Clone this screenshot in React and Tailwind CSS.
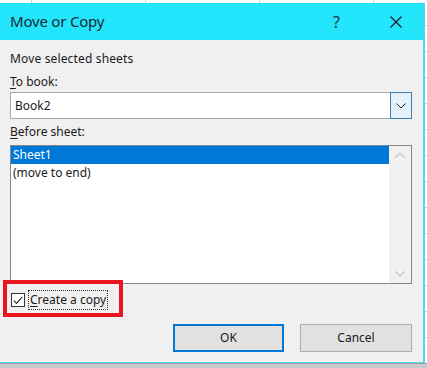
import React from 'react';

const font = { fontFamily: '"Noto Sans", "Open Sans", Arial, sans-serif' };

// Dialog window sitting over an Excel sheet
const App = () => {
	return (
		<div
			className="relative w-[427px] h-[368px] overflow-hidden bg-white bg-[repeating-linear-gradient(90deg,transparent_0,transparent_31px,#d4d4d4_31px,#d4d4d4_32px,transparent_32px,transparent_114px)]"
			style={font}
		>
			<div className="mt-[3px] w-[425px] h-[360px] flex flex-col bg-[#f0f0f0] border-r-2 border-b-[1px] border-[#4fd8ea] text-[#1a1a1a]">
				{/* title bar */}
				<div className="h-[37px] shrink-0 bg-[#22e4fb] flex items-center pl-[10px] pr-[21px]">
					<span className="text-[15px] text-[#152a30] tracking-[-0.2px]">Move or Copy</span>
					<span className="ml-auto text-[16px] text-[#1d3b44] mr-[50px]">?</span>
					<svg width="12" height="12" viewBox="0 0 12 12">
						<path d="M0.5 0.5L11.5 11.5M11.5 0.5L0.5 11.5" stroke="#1a1a1a" strokeWidth="1.1" />
					</svg>
				</div>

				<div className="flex flex-col pl-[10px] pr-[11px] pt-[11px] text-[12px] leading-[16px]">
					<div className="tracking-[0.15px]">Move selected sheets</div>
					<div className="mt-[7px]">
						<span className="underline underline-offset-2">T</span>o book:
					</div>

					<div className="mt-[2px] h-[27px] flex items-stretch bg-white border border-[#a9a9a9]">
						<div className="flex-1 flex items-center pl-[4px]">Book2</div>
						<div className="w-[22px] flex items-center justify-center bg-[#e5f1fb] border border-[#3c7fb1] -my-[1px] -mr-[1px]">
							<svg width="10" height="6" viewBox="0 0 10 6">
								<path d="M0.5 0.5L5 5L9.5 0.5" stroke="#222" strokeWidth="1" fill="none" />
							</svg>
						</div>
					</div>

					<div className="mt-[5px]">
						<span className="underline underline-offset-2">B</span>efore sheet:
					</div>

					<div className="mt-[5px] h-[139px] flex bg-white border border-[#828790]">
						<div className="flex-1 flex flex-col">
							<div className="h-[18px] flex items-center pl-[2px] bg-[#0078d7] text-white">Sheet1</div>
							<div className="h-[18px] flex items-center pl-[2px]">(move to end)</div>
						</div>
						<div className="w-[22px] bg-[#f0f0f0] flex flex-col items-center justify-between py-[6px]">
							<svg width="10" height="6" viewBox="0 0 10 6">
								<path d="M0.5 5.5L5 1L9.5 5.5" stroke="#c2c2c2" strokeWidth="1.2" fill="none" />
							</svg>
							<svg width="10" height="6" viewBox="0 0 10 6">
								<path d="M0.5 0.5L5 5L9.5 0.5" stroke="#c2c2c2" strokeWidth="1.2" fill="none" />
							</svg>
						</div>
					</div>

					<div className="mt-[6px] h-[20px] flex items-center">
						<div className="w-[14px] h-[14px] ml-[1px] bg-white border border-[#333] flex items-center justify-center">
							<svg width="10" height="9" viewBox="0 0 10 9">
								<path d="M0.8 4.6L3.6 7.4L9.2 1" stroke="#222" strokeWidth="1.1" fill="none" />
							</svg>
						</div>
						<div className="ml-[3px] h-[20px] px-[1px] flex items-center border border-dotted border-[#333]">
							<span className="underline underline-offset-2">C</span>reate a copy
						</div>
					</div>

					<div className="mt-[14px] flex justify-end gap-[16px]">
						<button className="w-[111px] h-[28px] bg-[#e1e1e1] border-2 border-[#0078d7] text-[12px]">OK</button>
						<button className="w-[112px] h-[28px] bg-[#e1e1e1] border border-[#adadad] text-[12px]">Cancel</button>
					</div>
				</div>
			</div>

			{/* grid showing right of the dialog */}
			<div className="absolute right-0 top-0 w-[2px] h-[368px] bg-[repeating-linear-gradient(180deg,#fff_0,#fff_25px,#cfcfcf_25px,#cfcfcf_26px)]"></div>
			{/* sheet strip below the dialog */}
			<div className="absolute left-0 bottom-0 w-[427px] h-[5px] bg-[#c9c9c9] border-t border-[#9a9a9a]"></div>

			{/* red annotation */}
			<div className="absolute left-[3px] top-[280px] w-[120px] h-[37px] border-4 border-[#e8141f]"></div>
		</div>
	);
};

export default App;
